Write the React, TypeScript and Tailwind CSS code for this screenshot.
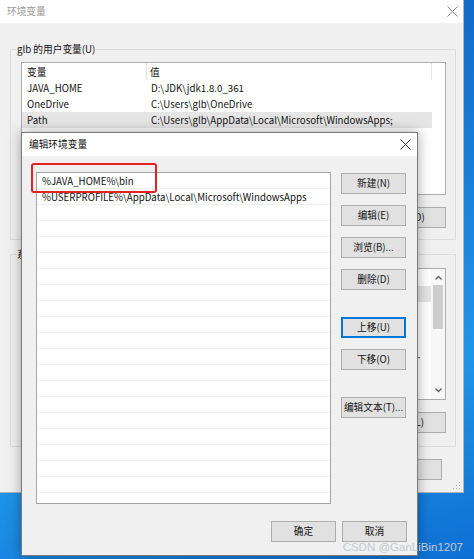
import React from "react";

const FONT = { fontFamily: '"Noto Sans CJK SC", "Noto Sans", sans-serif' };

function Btn({ children, w = "w-[65px]", focused = false }: { children: React.ReactNode; w?: string; focused?: boolean }) {
  return (
    <div
      className={`${w} h-[21px] flex items-center justify-center whitespace-nowrap text-[9.7px] text-[#111] bg-[#e1e1e1] ${
        focused ? "border-2 border-[#0078d7]" : "border border-[#adadad]"
      }`}
    >
      {children}
    </div>
  );
}

function CloseX({ color = "#555" }: { color?: string }) {
  return (
    <svg width="11" height="11" viewBox="0 0 11 11">
      <path d="M0.5 0.5 L10.5 10.5 M10.5 0.5 L0.5 10.5" stroke={color} strokeWidth="1" />
    </svg>
  );
}

function GroupBox({ label, children, className = "" }: { label: string; children: React.ReactNode; className?: string }) {
  return (
    <div className={`relative border border-[#dcdcdc] ${className}`}>
      <span className="absolute -top-[9px] left-[5px] bg-[#f0f0f0] px-[1px] text-[9.7px] leading-[16px] text-[#111]">
        {label}
      </span>
      {children}
    </div>
  );
}

export default function App() {
  const userRows = [
    ["JAVA_HOME", "D:\\JDK\\jdk1.8.0_361"],
    ["OneDrive", "C:\\Users\\glb\\OneDrive"],
    ["Path", "C:\\Users\\glb\\AppData\\Local\\Microsoft\\WindowsApps;"],
  ];
  const sysRows = [
    ["ComSpec", "C:\\Windows\\system32\\cmd.exe"],
    ["DriverData", "C:\\Windows\\System32\\Drivers\\DriverData"],
    ["NUMBER_OF_PROCESSORS", "8"],
    ["OS", "Windows_NT"],
    ["Path", "C:\\Windows\\system32;C:\\Windows;C:\\Windows\\System32\\Wbem;C:\\Windows\\System32\\WindowsPowerShell\\v1.0\\;C:\\Windows\\System32\\OpenSSH\\"],
    ["PATHEXT", ".COM;.EXE;.BAT;.CMD;.VBS;.VBE;.JS;.JSE;.WSF;.WSH;.MSC"],
    ["PROCESSOR_ARCHITECTURE", "AMD64"],
  ];
  const pathRows = ["%JAVA_HOME%\\bin", "%USERPROFILE%\\AppData\\Local\\Microsoft\\WindowsApps"];
  const emptyRows = Array.from({ length: 19 });

  return (
    <div
      style={FONT}
      className="relative w-[474px] h-[559px] overflow-hidden bg-[linear-gradient(165deg,#0b5cc0_0%,#1a7fdc_45%,#1f95ea_70%,#0e6fd2_100%)]"
    >
      {/* Outer window: 环境变量 */}
      <div className="absolute left-0 top-0 w-[464px] h-[493px] bg-[#f0f0f0] border-r border-b border-[#b5b5b5] flex flex-col">
        <div className="h-[23px] bg-white flex items-center justify-between pl-[7px] pr-[5px]">
          <span className="text-[9.7px] text-[#9a9a9a]">环境变量</span>
          <CloseX color="#8a8a8a" />
        </div>
        <div className="flex flex-col px-[10px] pt-[26px]">
          <GroupBox label="glb 的用户变量(U)" className="h-[191px] w-[446px] px-[10px] pt-[12px] flex flex-col">
            <div className="w-[425px] h-[133px] bg-white border border-[#adadad] flex flex-col text-[9.7px] leading-[16px] text-[#111]">
              <div className="h-[17px] flex items-center">
                <div className="w-[125px] h-full pl-[5px] border-r border-[#e5e5e5] flex items-center">变量</div>
                <div className="w-[285px] h-full pl-[3px] border-r border-[#e5e5e5] flex items-center">值</div>
              </div>
              {userRows.map(([k, v], i) => (
                <div key={k} className={`h-[16px] w-[410px] flex items-center ${i === 2 ? "bg-[#e5e5e5]" : ""}`}>
                  <div className="w-[126px] pl-[5px]">{k}</div>
                  <div className="flex-1 pl-[3px] whitespace-nowrap overflow-hidden">{v}</div>
                </div>
              ))}
            </div>
            <div className="mt-[12px] w-[425px] flex justify-end gap-[8px]">
              <Btn w="w-[75px]">新建(N)...</Btn>
              <Btn w="w-[75px]">编辑(E)...</Btn>
              <Btn w="w-[75px]">删除(D)</Btn>
            </div>
          </GroupBox>

          <GroupBox label="系统变量(S)" className="mt-[14px] h-[193px] w-[446px] px-[10px] pt-[13px] flex flex-col">
            <div className="w-[425px] h-[132px] bg-white border border-[#adadad] flex text-[9.7px] leading-[16px] text-[#111]">
              <div className="flex-1 flex flex-col overflow-hidden">
                <div className="h-[17px] flex items-center">
                  <div className="w-[125px] pl-[5px]">变量</div>
                  <div className="flex-1 pl-[3px]">值</div>
                </div>
                {sysRows.map(([k, v], i) => (
                  <div key={k + i} className={`h-[16px] flex items-center ${i === 0 ? "bg-[#e5e5e5]" : ""}`}>
                    <div className="w-[126px] shrink-0 pl-[5px] whitespace-nowrap overflow-hidden">{k}</div>
                    <div className="w-[276px] pl-[3px] truncate">{v}</div>
                  </div>
                ))}
              </div>
              <div className="w-[14px] flex flex-col items-center bg-[#f7f7f7]">
                <svg width="9" height="14" viewBox="0 0 9 14" className="mt-[2px]">
                  <path d="M1.5 8.5 L4.5 5.5 L7.5 8.5" stroke="#606060" strokeWidth="1.3" fill="none" />
                </svg>
                <div className="w-[10px] h-[44px] bg-[#cdcdcd]" />
                <div className="flex-1" />
                <svg width="9" height="14" viewBox="0 0 9 14" className="mb-[2px]">
                  <path d="M1.5 5.5 L4.5 8.5 L7.5 5.5" stroke="#606060" strokeWidth="1.3" fill="none" />
                </svg>
              </div>
            </div>
            <div className="mt-[12px] w-[425px] flex justify-end gap-[8px]">
              <Btn w="w-[75px]">新建(W)...</Btn>
              <Btn w="w-[75px]">编辑(I)...</Btn>
              <Btn w="w-[75px]">删除(L)</Btn>
            </div>
          </GroupBox>

          <div className="mt-[12px] w-[432px] flex justify-end gap-[8px]">
            <Btn w="w-[75px]">确定</Btn>
            <Btn w="w-[75px]">取消</Btn>
          </div>
        </div>
        <svg width="8" height="8" viewBox="0 0 8 8" className="absolute right-[2px] bottom-[2px]">
          <rect x="6" y="0" width="1" height="1" fill="#b0b0b0" />
          <rect x="3" y="3" width="1" height="1" fill="#b0b0b0" />
          <rect x="6" y="3" width="1" height="1" fill="#b0b0b0" />
          <rect x="0" y="6" width="1" height="1" fill="#b0b0b0" />
          <rect x="3" y="6" width="1" height="1" fill="#b0b0b0" />
          <rect x="6" y="6" width="1" height="1" fill="#b0b0b0" />
        </svg>
      </div>

      {/* Inner dialog: 编辑环境变量 */}
      <div className="absolute left-[21px] top-[132px] w-[397px] h-[424px] bg-[#f0f0f0] border border-[#7a7a7a] shadow-[0_0_12px_rgba(0,0,0,0.35)] flex flex-col">
        <div className="h-[23px] bg-white flex items-center justify-between pl-[7px] pr-[6px]">
          <span className="text-[9.7px] text-[#111]">编辑环境变量</span>
          <CloseX color="#333" />
        </div>
        <div className="flex pl-[14px] pt-[16px] gap-[10px]">
          <div className="relative w-[295px] h-[332px] bg-white border border-[#a5a5a5]">
            <div className="flex flex-col text-[9.7px] leading-[16px] text-[#111] overflow-hidden h-full">
              {pathRows.map((r) => (
                <div key={r} className="h-[16px] shrink-0 pl-[5px] border-b border-[#f0f0f0] flex items-center whitespace-nowrap">
                  {r}
                </div>
              ))}
              {emptyRows.map((_, i) => (
                <div key={i} className="h-[16px] shrink-0 border-b border-[#f0f0f0] ml-[2px]" />
              ))}
            </div>
            <div className="absolute left-[-6px] top-[-10px] w-[126px] h-[30px] border-2 border-[#e32222] rounded-[3px]" />
          </div>
          <div className="flex flex-col pt-[1px]">
            <Btn>新建(N)</Btn>
            <div className="mt-[11px]"><Btn>编辑(E)</Btn></div>
            <div className="mt-[11px]"><Btn>浏览(B)...</Btn></div>
            <div className="mt-[11px]"><Btn>删除(D)</Btn></div>
            <div className="mt-[27px]"><Btn focused>上移(U)</Btn></div>
            <div className="mt-[11px]"><Btn>下移(O)</Btn></div>
            <div className="mt-[27px]"><Btn>编辑文本(T)...</Btn></div>
          </div>
        </div>
        <div className="flex justify-end gap-[6px] pr-[10px] mt-[17px]">
          <Btn>确定</Btn>
          <Btn>取消</Btn>
        </div>
      </div>

      <div
        className="absolute right-[11px] bottom-[5px] text-[11.5px] leading-[14px] text-[#c3c9d2]"
        style={{ fontFamily: '"Liberation Sans", Arial, sans-serif' }}
      >
        CSDN @GanLiBin1207
      </div>
    </div>
  );
}
